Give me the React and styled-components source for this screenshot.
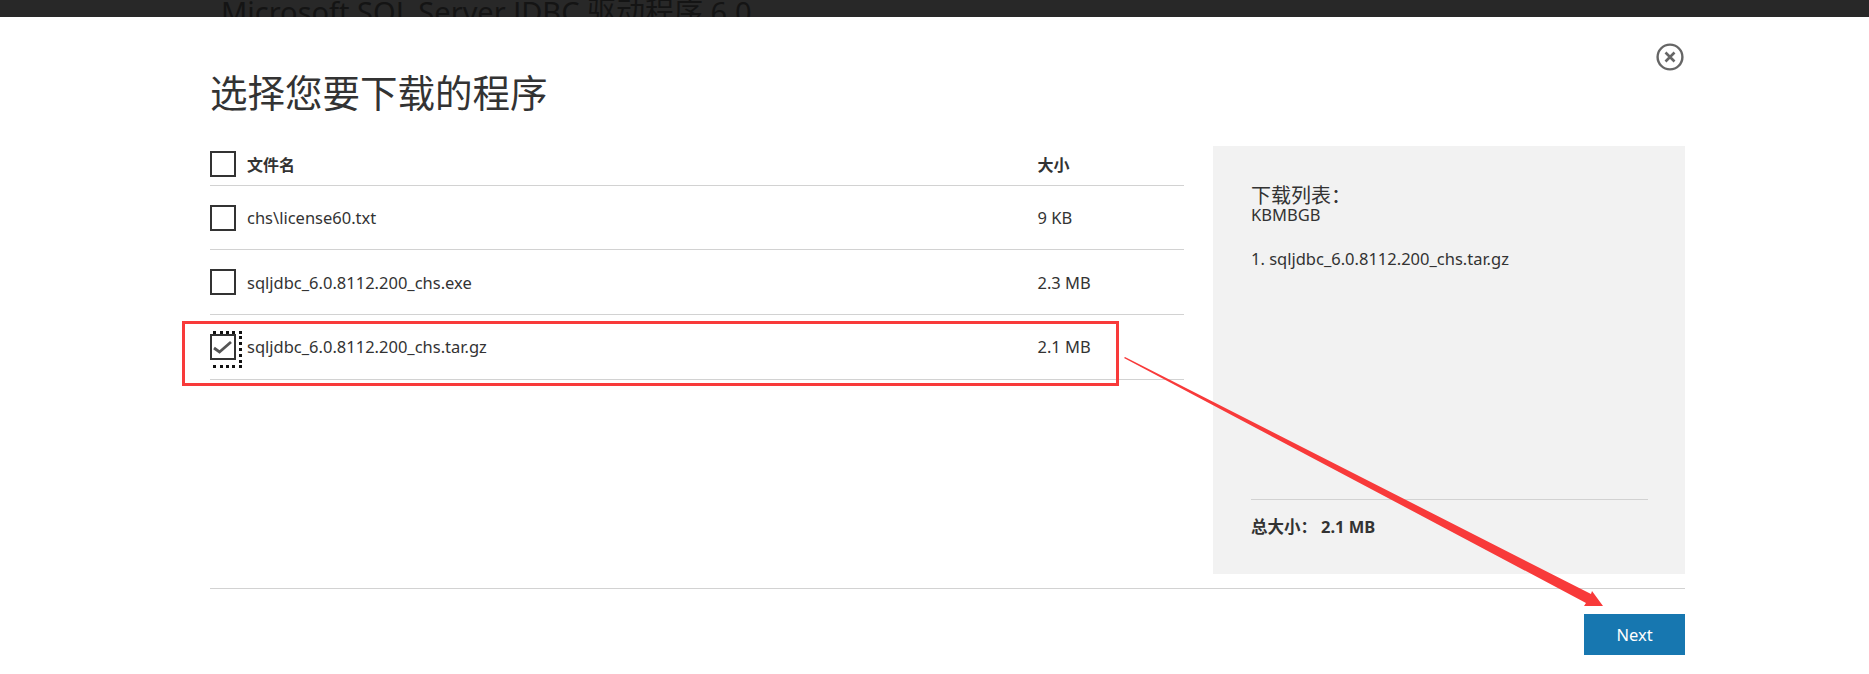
import styled, { createGlobalStyle } from 'styled-components';

const files = [
  { name: 'chs\\license60.txt', size: '9 KB' },
  { name: 'sqljdbc_6.0.8112.200_chs.exe', size: '2.3 MB' },
  { name: 'sqljdbc_6.0.8112.200_chs.tar.gz', size: '2.1 MB', checked: true },
];

const App = () => (
  <Page>
    <GlobalStyle />
    <TopBar>
      <BarTitle>Microsoft SQL Server JDBC 驱动程序 6.0</BarTitle>
    </TopBar>
    <Modal>
      <CloseButton aria-label="close">
        <svg width="28" height="28" viewBox="0 0 28 28" fill="none" stroke="#666" strokeWidth="2.4">
          <circle cx="14" cy="14" r="12.4" />
          <path d="M9.5 9.5l9 9M18.5 9.5l-9 9" strokeWidth="2.6" />
        </svg>
      </CloseButton>
      <Heading>选择您要下载的程序</Heading>
      <Body>
        <FileTable>
          <HeaderRow>
            <Box />
            <HeaderLabel>文件名</HeaderLabel>
            <HeaderLabel>大小</HeaderLabel>
          </HeaderRow>
          {files.map((file) => (
            <FileRow key={file.name}>
              <Box $focused={file.checked}>
                {file.checked && (
                  <svg width="22" height="22" viewBox="0 0 22 22" fill="none" stroke="#555" strokeWidth="2.8">
                    <path d="M2 12l5.5 4L19 6" />
                  </svg>
                )}
              </Box>
              <span>{file.name}</span>
              <span>{file.size}</span>
            </FileRow>
          ))}
        </FileTable>
        <Summary>
          <SummaryTitle>下载列表：</SummaryTitle>
          <Units>KBMBGB</Units>
          <Picked>1. sqljdbc_6.0.8112.200_chs.tar.gz</Picked>
          <Total>
            <span>总大小：</span>
            <span>2.1 MB</span>
          </Total>
        </Summary>
      </Body>
      <Footer>
        <NextButton>Next</NextButton>
      </Footer>
    </Modal>

    {/* hand drawn markup on top of the screenshot */}
    <RedFrame />
    <ArrowLayer width="1869" height="674" viewBox="0 0 1869 674">
      <path d="M1124 358L1125 357L1591 594L1592 591L1603 606L1584 606L1586 603Z" fill="#f83a3a" />
    </ArrowLayer>
  </Page>
);

const GlobalStyle = createGlobalStyle`
  html, body {
    margin: 0;
    padding: 0;
    background: #fff;
  }
  * {
    box-sizing: border-box;
  }
`;

const Page = styled.div`
  position: relative;
  width: 1869px;
  height: 674px;
  overflow: hidden;
  background: #fff;
  color: #333;
  font-family: 'Noto Sans', 'Noto Sans CJK SC', sans-serif;
  font-size: 16.5px;
`;

const TopBar = styled.div`
  height: 17px;
  padding-left: 221px;
  overflow: hidden;
  background: #282828;
`;

const BarTitle = styled.div`
  font-size: 29px;
  line-height: 36px;
  margin-top: -6px;
  color: #141414;
  white-space: nowrap;
`;

const Modal = styled.div`
  position: relative;
  padding: 49px 184px 0 210px;
`;

const CloseButton = styled.button`
  position: absolute;
  top: 26px;
  right: 185px;
  width: 28px;
  height: 28px;
  padding: 0;
  border: 0;
  background: none;
  display: flex;
`;

const Heading = styled.h1`
  margin: 0 0 30px;
  font-family: 'Noto Sans CJK SC', sans-serif;
  font-size: 37.5px;
  line-height: 50px;
  font-weight: 400;
  color: #333;
`;

const Body = styled.div`
  display: flex;
  gap: 29px;
  height: 428px;
`;

const FileTable = styled.div`
  width: 974px;
`;

const HeaderRow = styled.div`
  display: grid;
  grid-template-columns: 37px 790.5px 1fr;
  align-items: center;
  height: 39.7px;
  padding-bottom: 3px;
  border-bottom: 1px solid #d2d2d2;
`;

const HeaderLabel = styled.span`
  font-family: 'Noto Sans CJK SC', sans-serif;
  font-size: 16px;
  font-weight: 700;
`;

const FileRow = styled.div`
  display: grid;
  grid-template-columns: 37px 790.5px 1fr;
  align-items: center;
  height: 64.67px;
  border-bottom: 1px solid #d2d2d2;
`;

const Box = styled.div`
  position: relative;
  width: 26px;
  height: 26px;
  border: 2px solid #333;
  display: flex;
  align-items: center;
  justify-content: center;

  ${({ $focused }) =>
    $focused &&
    `
    &::after {
      content: '';
      position: absolute;
      top: -5px;
      left: 1px;
      width: 26px;
      height: 31px;
      border: 3px dotted #111;
      border-left: 0;
    }
  `}
`;

const Summary = styled.aside`
  flex: 1;
  display: flex;
  flex-direction: column;
  padding: 37px 37px 0 38px;
  background: #f2f2f2;
`;

const SummaryTitle = styled.div`
  font-family: 'Noto Sans CJK SC', sans-serif;
  font-size: 20px;
  line-height: 24px;
`;

const Units = styled.div`
  line-height: 16px;
`;

const Picked = styled.div`
  margin-top: 26px;
  line-height: 20px;
`;

const Total = styled.div`
  margin-top: auto;
  display: flex;
  gap: 4px;
  height: 75px;
  padding-top: 15px;
  border-top: 1px solid #d2d2d2;
  font-weight: 700;
  line-height: 24px;
`;

const Footer = styled.div`
  display: flex;
  justify-content: flex-end;
  margin-top: 14px;
  padding-top: 25px;
  border-top: 1px solid #d2d2d2;
`;

const NextButton = styled.button`
  width: 101px;
  height: 41px;
  border: 0;
  background: #1777b0;
  color: #fff;
  font-family: inherit;
  font-size: 16.5px;
`;

const RedFrame = styled.div`
  position: absolute;
  left: 182px;
  top: 321px;
  width: 937px;
  height: 65px;
  border: 3px solid #f83a3a;
  pointer-events: none;
`;

const ArrowLayer = styled.svg`
  position: absolute;
  left: 0;
  top: 0;
  pointer-events: none;
`;

export default App;
